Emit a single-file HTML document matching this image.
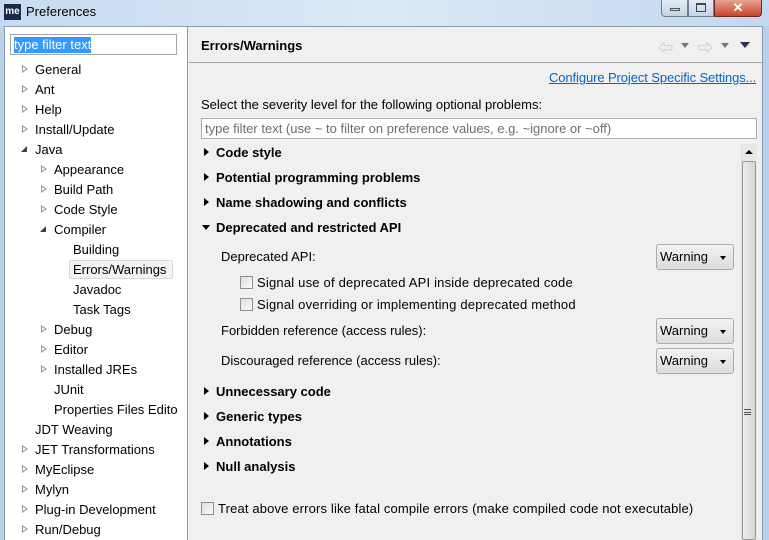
<!DOCTYPE html>
<html><head><style>
*{margin:0;padding:0;box-sizing:border-box}
body{width:769px;height:540px;overflow:hidden;background:#b9d1ea;font-family:"Liberation Sans","Noto Sans CJK SC",sans-serif;font-size:13px;color:#000;position:relative}
.a{position:absolute;white-space:nowrap}
.title{left:0;top:0;width:769px;height:26px;background:linear-gradient(90deg,#c6dbf1,#dbe8f6 50%,#c3d8ef)}
.left{left:4px;top:26px;width:184px;height:514px;background:#fff;border:1px solid #8e9cab;border-bottom:none}
.right{left:188px;top:26px;width:575px;height:514px;background:#f0f0f0;border-top:1px solid #8e9cab;border-right:1px solid #8e9cab}
.tri{position:absolute;width:0;height:0;border-left:6px solid #999;border-top:4px solid transparent;border-bottom:4px solid transparent}
.tri:after{content:"";position:absolute;left:-5px;top:-2px;border-left:3px solid #fff;border-top:2px solid transparent;border-bottom:2px solid transparent}
.open{position:absolute;width:0;height:0;border-right:6px solid #404040;border-top:6px solid transparent}
.bt{position:absolute;width:0;height:0;border-left:5px solid #000;border-top:4px solid transparent;border-bottom:4px solid transparent}
.bd{position:absolute;width:0;height:0;border-top:5px solid #000;border-left:4px solid transparent;border-right:4px solid transparent}
.b{font-weight:bold}
.combo{position:absolute;width:78px;height:26px;border:1px solid #acacac;border-radius:3px;background:linear-gradient(#f2f2f2,#dcdcdc);padding:4px 0 0 3px}
.combo:after{content:"";position:absolute;right:7px;top:11px;border-top:4px solid #000;border-left:3px solid transparent;border-right:3px solid transparent}
.cb{position:absolute;width:13px;height:13px;border:1px solid #8f8f8f;background:linear-gradient(135deg,#ddd,#fafafa)}
</style></head><body>
<div class="a title"></div>
<div class="a" style="left:4px;top:4px;width:17px;height:16px;background:#1b2a44;color:#fff;font-size:10px;font-weight:bold;text-align:center;line-height:16px">me</div>
<div class="a" style="left:26px;top:4px;font-size:13px">Preferences</div>
<div class="a" style="left:661px;top:0;width:27px;height:17px;border:1px solid #6f7f93;border-top:none;border-radius:0 0 0 4px;background:linear-gradient(#e4ecf6,#c4d3e5)"><div style="margin:8px auto 0;width:10px;height:3px;border:1px solid #555"></div></div>
<div class="a" style="left:688px;top:0;width:26px;height:17px;border:1px solid #6f7f93;border-top:none;background:linear-gradient(#e4ecf6,#c4d3e5)"><div style="margin:3px auto 0;width:10px;height:9px;border:1px solid #444;border-top-width:2px"></div></div>
<div class="a" style="left:714px;top:0;width:48px;height:17px;border:1px solid #6a2a20;border-top:none;border-radius:0 0 4px 0;background:linear-gradient(#e8a393,#c5452c);color:#fff;font-weight:bold;text-align:center;font-size:13px;line-height:15px">✕</div>

<div class="a left"></div>
<div class="a" style="left:10px;top:34px;width:167px;height:21px;border:1px solid #a5a5a5;background:#fff"><span style="background:#3399ff;color:#fff;margin:2px 0 0 3px;display:inline-block;line-height:16px">type filter text</span></div>
<div class="tri" style="left:22px;top:65px"></div><div class="a" style="left:35px;top:62px">General</div>
<div class="tri" style="left:22px;top:85px"></div><div class="a" style="left:35px;top:82px">Ant</div>
<div class="tri" style="left:22px;top:105px"></div><div class="a" style="left:35px;top:102px">Help</div>
<div class="tri" style="left:22px;top:125px"></div><div class="a" style="left:35px;top:122px">Install/Update</div>
<div class="open" style="left:21px;top:146px"></div><div class="a" style="left:35px;top:142px">Java</div>
<div class="tri" style="left:41px;top:165px"></div><div class="a" style="left:54px;top:162px">Appearance</div>
<div class="tri" style="left:41px;top:185px"></div><div class="a" style="left:54px;top:182px">Build Path</div>
<div class="tri" style="left:41px;top:205px"></div><div class="a" style="left:54px;top:202px">Code Style</div>
<div class="open" style="left:40px;top:226px"></div><div class="a" style="left:54px;top:222px">Compiler</div>
<div class="a" style="left:73px;top:242px">Building</div>
<div class="a" style="left:69px;top:260px;width:104px;height:19px;border:1px solid #d9d9d9;border-radius:2px;background:#f3f3f3"></div>
<div class="a" style="left:73px;top:262px">Errors/Warnings</div>
<div class="a" style="left:73px;top:282px">Javadoc</div>
<div class="a" style="left:73px;top:302px">Task Tags</div>
<div class="tri" style="left:41px;top:325px"></div><div class="a" style="left:54px;top:322px">Debug</div>
<div class="tri" style="left:41px;top:345px"></div><div class="a" style="left:54px;top:342px">Editor</div>
<div class="tri" style="left:41px;top:365px"></div><div class="a" style="left:54px;top:362px">Installed JREs</div>
<div class="a" style="left:54px;top:382px">JUnit</div>
<div class="a" style="left:54px;top:402px">Properties Files Edito</div>
<div class="a" style="left:35px;top:422px">JDT Weaving</div>
<div class="tri" style="left:22px;top:445px"></div><div class="a" style="left:35px;top:442px">JET Transformations</div>
<div class="tri" style="left:22px;top:465px"></div><div class="a" style="left:35px;top:462px">MyEclipse</div>
<div class="tri" style="left:22px;top:485px"></div><div class="a" style="left:35px;top:482px">Mylyn</div>
<div class="tri" style="left:22px;top:505px"></div><div class="a" style="left:35px;top:502px">Plug-in Development</div>
<div class="tri" style="left:22px;top:525px"></div><div class="a" style="left:35px;top:522px">Run/Debug</div>

<div class="a right"></div>
<div class="a b" style="left:201px;top:38px">Errors/Warnings</div>
<div class="a" style="left:658px;top:37px;color:#bbb;font-size:15px">⇦</div>
<div class="bd" style="left:681px;top:43px;border-top-color:#777"></div>
<div class="a" style="left:698px;top:37px;color:#bbb;font-size:15px">⇨</div>
<div class="bd" style="left:721px;top:43px;border-top-color:#777"></div>
<div class="bd" style="left:740px;top:42px;border-top:6px solid #3a2a50;border-left-width:5px;border-right-width:5px"></div>
<div class="a" style="left:189px;top:62px;width:573px;height:1px;background:#a0a0a0"></div>
<div class="a" style="left:549px;top:70px;color:#0066cc;text-decoration:underline;letter-spacing:-0.1px">Configure Project Specific Settings...</div>
<div class="a" style="left:201px;top:97px">Select the severity level for the following optional problems:</div>
<div class="a" style="left:201px;top:118px;width:556px;height:21px;border:1px solid #abadb3;background:#fff;color:#6d6d6d;padding:2px 0 0 3px">type filter text (use ~ to filter on preference values, e.g. ~ignore or ~off)</div>
<div class="bt" style="left:204px;top:148px"></div><div class="a b" style="left:216px;top:145px">Code style</div>
<div class="bt" style="left:204px;top:173px"></div><div class="a b" style="left:216px;top:170px">Potential programming problems</div>
<div class="bt" style="left:204px;top:198px"></div><div class="a b" style="left:216px;top:195px">Name shadowing and conflicts</div>
<div class="bd" style="left:202px;top:225px"></div><div class="a b" style="left:216px;top:220px">Deprecated and restricted API</div>
<div class="a" style="left:221px;top:249px">Deprecated API:</div>
<div class="combo" style="left:656px;top:244px">Warning</div>
<div class="cb" style="left:240px;top:276px"></div><div class="a" style="left:257px;top:275px;letter-spacing:0.2px">Signal use of deprecated API inside deprecated code</div>
<div class="cb" style="left:240px;top:298px"></div><div class="a" style="left:257px;top:297px;letter-spacing:0.2px">Signal overriding or implementing deprecated method</div>
<div class="a" style="left:221px;top:323px">Forbidden reference (access rules):</div>
<div class="combo" style="left:656px;top:318px">Warning</div>
<div class="a" style="left:221px;top:353px">Discouraged reference (access rules):</div>
<div class="combo" style="left:656px;top:348px">Warning</div>
<div class="bt" style="left:204px;top:387px"></div><div class="a b" style="left:216px;top:384px">Unnecessary code</div>
<div class="bt" style="left:204px;top:412px"></div><div class="a b" style="left:216px;top:409px">Generic types</div>
<div class="bt" style="left:204px;top:437px"></div><div class="a b" style="left:216px;top:434px">Annotations</div>
<div class="bt" style="left:204px;top:462px"></div><div class="a b" style="left:216px;top:459px">Null analysis</div>
<div class="cb" style="left:201px;top:502px"></div><div class="a" style="left:218px;top:501px;letter-spacing:0.15px">Treat above errors like fatal compile errors (make compiled code not executable)</div>
<div class="a" style="left:741px;top:144px;width:16px;height:396px;background:#e8e8e8;border-left:1px solid #ddd"></div>
<div class="bd" style="left:745px;top:150px;border-top:none;border-bottom:4px solid #000;border-left-width:4px;border-right-width:4px"></div>
<div class="a" style="left:742px;top:161px;width:14px;height:379px;border:1px solid #999;border-radius:2px;background:linear-gradient(90deg,#ececec,#d6d6d6)"></div>
<div class="a" style="left:744px;top:409px;width:7px;height:6px;border-top:1px solid #555;border-bottom:1px solid #555"><div style="margin-top:2px;height:1px;background:#555"></div></div>
</body></html>
